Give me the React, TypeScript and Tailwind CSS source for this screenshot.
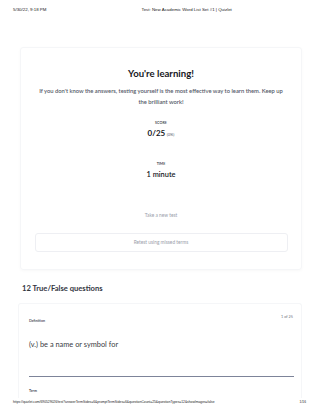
import React from "react";

export default function App() {
  const q = { fontFamily: '"Lato", "Noto Sans", sans-serif' };
  const sys = { fontFamily: '"Liberation Sans", Arial, sans-serif' };
  return (
    <div className="w-[320px] h-[414px] bg-white overflow-hidden text-[#33363f] antialiased" style={q}>
      <div className="h-[20px] flex items-center pl-[13px] text-[4.4px] text-[#222]" style={sys}>
        <span>5/30/22, 9:18 PM</span>
        <span className="ml-[95px]">Test: New Academic Word List Set #1 | Quizlet</span>
      </div>

      <div className="mt-[27px] ml-[20px] w-[282px] h-[223px] rounded-[3px] border border-[#f5f6f8] shadow-[0_1px_3px_rgba(0,0,0,0.03)] flex flex-col items-center pt-[20px]">
        <div className="text-[9.6px] leading-[11px] font-bold text-[#16181d]">You're learning!</div>
        <div className="mt-[6px] w-[270px] text-center text-[5.8px] leading-[11px] font-semibold text-[#555a68]">
          If you don't know the answers, testing yourself is the most effective way to learn them. Keep up
          <br />
          the brilliant work!
        </div>
        <div className="mt-[13px] text-[3.6px] leading-[5px] font-semibold tracking-[0.1px] text-[#33363f]">SCORE</div>
        <div className="mt-[4px] leading-[9px] flex items-baseline">
          <span className="text-[8px] font-bold text-[#16181d]">0/25</span>
          <span className="ml-[1.5px] text-[4px] text-[#555a68]">(0%)</span>
        </div>
        <div className="mt-[22px] text-[3.6px] leading-[5px] font-semibold text-[#33363f]">TIME</div>
        <div className="mt-[4px] text-[7.4px] leading-[9px] font-semibold text-[#16181d]">1 minute</div>
        <div className="mt-[33px] text-[4.8px] leading-[6px] text-[#9a9eaa]">Take a new test</div>
        <div className="mt-[15px] w-[253px] h-[19px] rounded-[3px] border border-[#eeeff3] flex items-center justify-center text-[4.8px] text-[#9a9eaa]">
          Retest using missed terms
        </div>
      </div>

      <div className="mt-[14px] ml-[22px] text-[7.6px] leading-[9px] font-bold text-[#33363f]">12 True/False questions</div>

      <div className="mt-[10px] ml-[18px] w-[284px] h-[95px] rounded-t-[3px] border border-b-0 border-[#f5f6f8] px-[10px] pt-[10px]">
        <div className="flex justify-between items-start">
          <span className="mt-[4px] text-[3.6px] leading-[5px] font-semibold text-[#33363f]">Definition</span>
          <span className="mr-[-2px] text-[3.8px] leading-[5px] text-[#6b6f7b]">1 of 25</span>
        </div>
        <div className="mt-[17px] text-[7.4px] leading-[9px] text-[#3a3c44]">(v.) be a name or symbol for</div>
        <div className="mt-[27px] h-[1px] bg-[#7d8499] w-[265px]"></div>
        <div className="mt-[11px] text-[3.6px] leading-[5px] font-semibold text-[#33363f]">Term</div>
      </div>

      <div className="mt-[-1px] flex items-center pl-[13px] pr-[14px] h-[10px] text-[3.3px] text-[#222]" style={sys}>
        <span>https://quizlet.com/690529026/test?answerTermSides=6&amp;promptTermSides=6&amp;questionCount=25&amp;questionTypes=12&amp;showImages=false</span>
        <span className="ml-auto">1/16</span>
      </div>
    </div>
  );
}
